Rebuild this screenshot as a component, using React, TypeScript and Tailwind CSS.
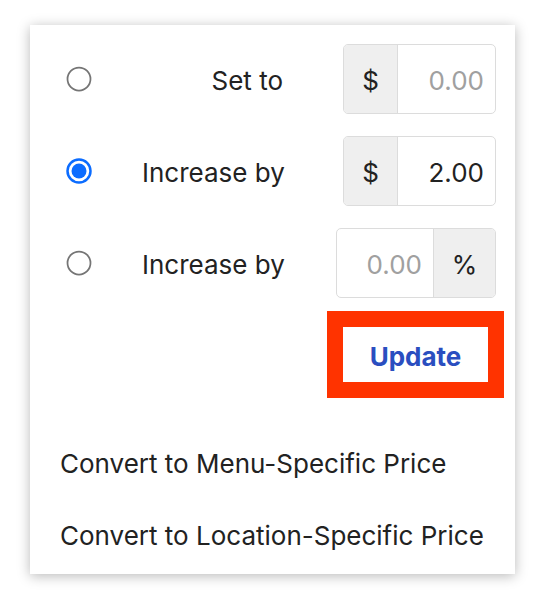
import React from "react";

const font = { fontFamily: "Inter, 'Noto Sans', 'Liberation Sans', sans-serif" };

function Radio({ checked }: { checked?: boolean }) {
  return (
    <svg width="26" height="26" viewBox="0 0 26 26" className="shrink-0">
      {checked ? (
        <>
          <circle cx="13" cy="13" r="11.5" fill="none" stroke="#0b6cff" strokeWidth="2.5" />
          <circle cx="13" cy="13" r="7.5" fill="#0b6cff" />
        </>
      ) : (
        <circle cx="13" cy="13" r="11.5" fill="#fff" stroke="#757575" strokeWidth="1.75" />
      )}
    </svg>
  );
}

function Addon({ children }: { children: React.ReactNode }) {
  return (
    <div className="flex h-full items-center justify-center bg-[#efefef] pt-[2px] text-[26px] text-[#222]">
      {children}
    </div>
  );
}

function Row({
  checked,
  label,
  value,
  filled,
  mode,
}: {
  checked?: boolean;
  label: string;
  value: string;
  filled?: boolean;
  mode: "prefix" | "suffix";
}) {
  const valueCls = filled ? "text-[#222]" : "text-[#a0a0a0]";
  return (
    <div className="flex h-[70px] items-center pl-[36px] pr-[19px]">
      <Radio checked={checked} />
      <div className="ml-[50px] w-[141px] whitespace-nowrap pt-[3px] text-right text-[26px] leading-[32px] text-[#222]">
        {label}
      </div>
      <div
        className={
          "ml-auto flex h-[70px] overflow-hidden rounded-[5px] border-[1.5px] border-[#dcdcdc] " +
          (mode === "prefix" ? "w-[153px]" : "w-[160px]")
        }
      >
        {mode === "prefix" ? (
          <>
            <div className="w-[54px] border-r-[1.5px] border-[#dcdcdc]">
              <Addon>$</Addon>
            </div>
            <div className={"flex flex-1 items-center justify-end pr-[11px] pt-[2px] text-[26px] " + valueCls}>
              {value}
            </div>
          </>
        ) : (
          <>
            <div className={"flex flex-1 items-center justify-end pr-[11px] pt-[2px] text-[26px] " + valueCls}>
              {value}
            </div>
            <div className="w-[62px] border-l-[1.5px] border-[#dcdcdc]">
              <Addon>%</Addon>
            </div>
          </>
        )}
      </div>
    </div>
  );
}

export default function App() {
  return (
    <div className="h-[600px] w-[546px] bg-white" style={font}>
      <div className="h-[25px]" />
      <div className="ml-[30px] h-[549px] w-[485px] bg-white shadow-[0_2px_12px_rgba(0,0,0,0.28)]">
        <div className="flex flex-col gap-[22px] pt-[19px]">
          <Row label="Set to" value="0.00" mode="prefix" />
          <Row checked label="Increase by" value="2.00" filled mode="prefix" />
          <Row label="Increase by" value="0.00" mode="suffix" />
        </div>
        <div className="mt-[13px] flex justify-end pr-[11px]">
          <button className="flex h-[87px] w-[177px] items-center justify-center border-[16px] border-[#ff3300] bg-white pt-[3px] text-[26px] font-bold text-[#2a4ec0]">
            Update
          </button>
        </div>
        <div className="mt-[29px] flex h-[72px] items-center pl-[30px] text-[26px] text-[#222]">
          Convert to Menu-Specific Price
        </div>
        <div className="flex h-[72px] items-center pl-[30px] text-[26px] text-[#222]">
          Convert to Location-Specific Price
        </div>
      </div>
    </div>
  );
}
